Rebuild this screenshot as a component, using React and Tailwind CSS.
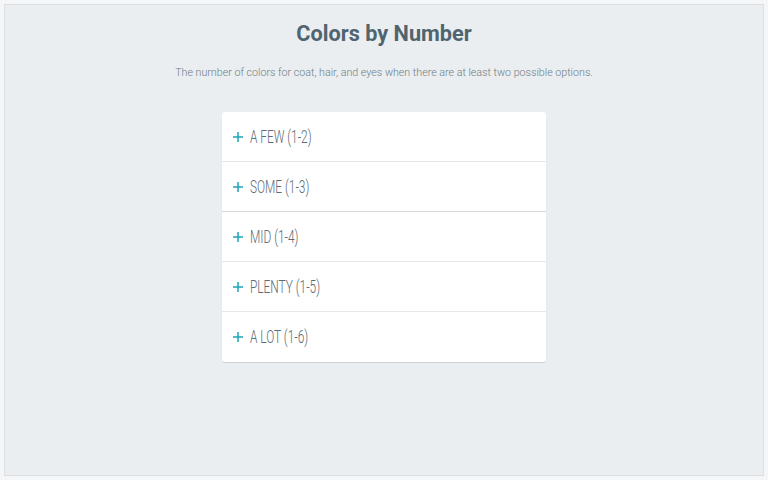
const items = ['A FEW (1-2)', 'SOME (1-3)', 'MID (1-4)', 'PLENTY (1-5)', 'A LOT (1-6)'];

function PlusIcon() {
  return (
    <svg width="10" height="10" viewBox="0 0 10 10" className="shrink-0">
      <rect x="0" y="4.25" width="10" height="1.5" fill="#1ba5b8" />
      <rect x="4.25" y="0" width="1.5" height="10" fill="#1ba5b8" />
    </svg>
  );
}

export default function App() {
  return (
    <div className="h-[480px] w-[768px] bg-[#f5f6f7] p-1" style={{ fontFamily: 'Roboto, "Liberation Sans", sans-serif' }}>
      <div className="flex h-full flex-col items-center border border-[#dcdfe1] bg-[#eaeef1]">
        <h1 className="mt-[15px] text-[21.7px] font-bold leading-[28px] text-[#506470]">Colors by Number</h1>
        <p className="mt-[18px] text-[10.7px] font-light leading-[14px] text-[#6e7c84]">
          The number of colors for coat, hair, and eyes when there are at least two possible options.
        </p>
        <div className="mt-[32px] w-[324px] overflow-hidden rounded-[3px] bg-white shadow-[0_1px_1px_rgba(0,0,0,0.12)]">
          {items.map((label, i) => (
            <div
              key={label}
              className={`flex h-[50px] items-center pl-[11px] ${i < items.length - 1 ? 'border-b' : ''} ${i === 1 ? 'border-[#d4d8db]' : 'border-[#e6e9eb]'}`}
            >
              <PlusIcon />
              <span className="ml-[7px] inline-block origin-left scale-x-[0.66] text-[18px] font-light leading-none text-[#5b6a73]">
                {label}
              </span>
            </div>
          ))}
        </div>
      </div>
    </div>
  );
}
